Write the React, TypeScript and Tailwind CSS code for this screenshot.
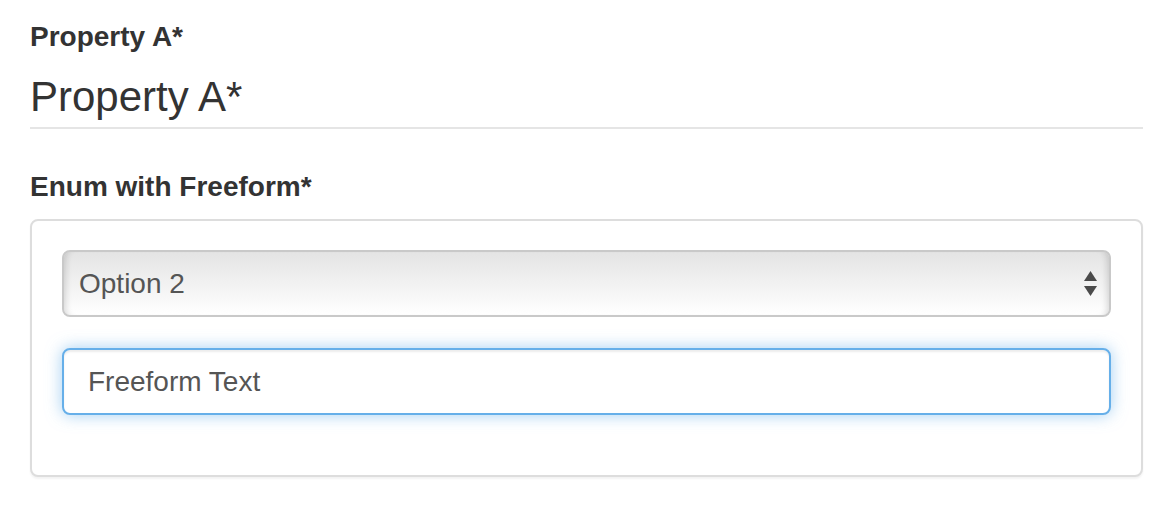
import React, { useState } from 'react';

export default function App() {
  const [choice, setChoice] = useState('Option 2');
  const [text, setText] = useState('Freeform Text');

  return (
    <div className="min-h-[510px] w-full bg-white pt-[17px] pl-[30px] pr-[27px] font-['Liberation_Sans',Arial,sans-serif] text-[#333]">
      {/* Property A */}
      <label className="block text-[28px] leading-[40px] font-bold mb-[10px]">Property A*</label>
      <div className="text-[42px] leading-[60px] border-b-2 border-[#e5e5e5] mb-[38px]">Property A*</div>

      {/* Enum with Freeform */}
      <label className="block text-[28px] leading-[40px] font-bold mb-[12px]">Enum with Freeform*</label>
      <div className="rounded-[8px] border-2 border-[#dddddd] bg-white px-[30px] pt-[29px] pb-[60px] shadow-[0_2px_2px_rgba(0,0,0,0.05)]">
        <div className="relative h-[67px]">
          <select
            value={choice}
            onChange={(e) => setChoice(e.target.value)}
            className="appearance-none w-full h-full rounded-[8px] border-2 border-[#c9c9c9] bg-linear-to-b from-[#e4e4e4] to-[#ffffff] pl-[15px] pr-[50px] text-[28px] text-[#555] outline-none shadow-[inset_7px_0_6px_-5px_rgba(0,0,0,0.14),inset_-7px_0_6px_-5px_rgba(0,0,0,0.14)] font-['Liberation_Sans',Arial,sans-serif]"
          >
            <option>Option 1</option>
            <option>Option 2</option>
            <option>Option 3</option>
          </select>
          <svg className="pointer-events-none absolute right-[14px] top-[21px]" width="13" height="25" viewBox="0 0 13 25">
            <polygon points="6.5,0 13,10 0,10" fill="#4a4a4a" />
            <polygon points="0,15 13,15 6.5,25" fill="#4a4a4a" />
          </svg>
        </div>
        <input
          value={text}
          onChange={(e) => setText(e.target.value)}
          className="mt-[31px] block w-full h-[67px] rounded-[8px] border-2 border-[#66afe9] bg-white px-[24px] text-[28px] text-[#555] outline-none shadow-[inset_0_2px_2px_rgba(0,0,0,0.075),0_0_16px_rgba(102,175,233,0.6)] font-['Liberation_Sans',Arial,sans-serif]"
        />
      </div>
    </div>
  );
}
